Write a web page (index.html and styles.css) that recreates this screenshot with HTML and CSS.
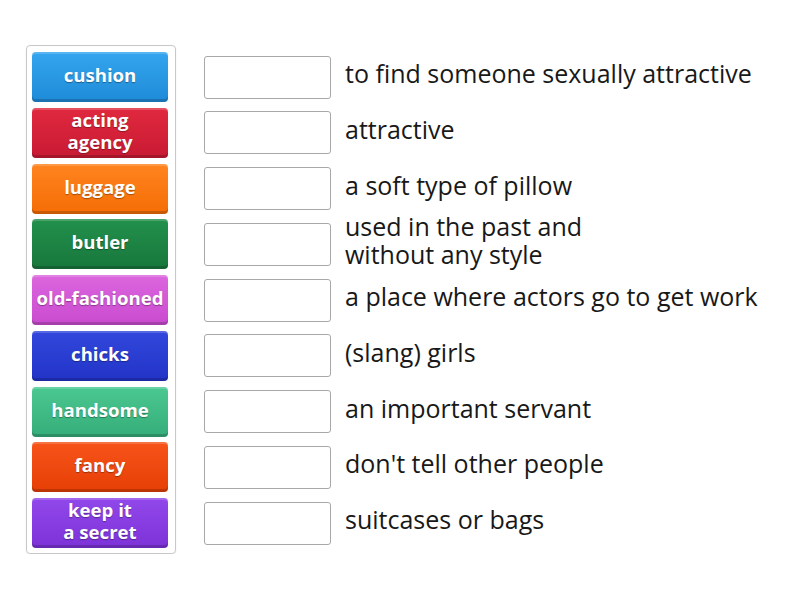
FILE: index.html
```
<!DOCTYPE html>
<html lang="en">
<head>
  <meta charset="UTF-8">
  <meta name="viewport" content="width=device-width, initial-scale=1.0">
  <title>Match up</title>
  <link rel="stylesheet" href="styles.css">
</head>
<body>
  <div class="activity">
    <div class="tray">
      <div class="tile blue">cushion</div>
      <div class="tile red">acting<br>agency</div>
      <div class="tile orange">luggage</div>
      <div class="tile green">butler</div>
      <div class="tile pink">old-fashioned</div>
      <div class="tile navy">chicks</div>
      <div class="tile mint">handsome</div>
      <div class="tile flame">fancy</div>
      <div class="tile purple">keep it<br>a secret</div>
    </div>
    <div class="targets">
      <div class="row"><div class="slot"></div><p class="clue">to find someone sexually attractive</p></div>
      <div class="row"><div class="slot"></div><p class="clue">attractive</p></div>
      <div class="row"><div class="slot"></div><p class="clue">a soft type of pillow</p></div>
      <div class="row"><div class="slot"></div><p class="clue">used in the past and<br>without any style</p></div>
      <div class="row"><div class="slot"></div><p class="clue">a place where actors go to get work</p></div>
      <div class="row"><div class="slot"></div><p class="clue">(slang) girls</p></div>
      <div class="row"><div class="slot"></div><p class="clue">an important servant</p></div>
      <div class="row"><div class="slot"></div><p class="clue">don't tell other people</p></div>
      <div class="row"><div class="slot"></div><p class="clue">suitcases or bags</p></div>
    </div>
  </div>
</body>
</html>
```

FILE: styles.css
```
body {
  margin: 0;
  background-color: #fff;
  font-family: "Open Sans", "Noto Sans", sans-serif;
}

.activity {
  display: flex;
  align-items: flex-start;
  gap: 28px;
  padding: 45px 0 0 26px;
}

.tray {
  display: flex;
  flex-direction: column;
  gap: 5.75px;
  padding: 6px 7px 5px 5px;
  border: 1px solid #c8c8c8;
  border-radius: 4px;
  box-shadow: 0 1px 2px rgba(0, 0, 0, 0.08);
}

.tile {
  box-sizing: border-box;
  width: 136px;
  height: 50px;
  padding-bottom: 4px;
  display: flex;
  justify-content: center;
  align-items: center;
  text-align: center;
  color: #fff;
  font-weight: 700;
  font-size: 18.6px;
  line-height: 22px;
  border-radius: 4px;
  text-shadow: 0 1px 1px rgba(0, 0, 0, 0.35);
  box-shadow: inset 0 -3px 0 rgba(0, 0, 0, 0.18), inset 0 2px 0 rgba(255, 255, 255, 0.18);
}

.blue { background: linear-gradient(#34a5ee, #1f8bd8); }
.red { background: linear-gradient(#e0293f, #c81a33); }
.orange { background: linear-gradient(#ff8420, #f56d05); }
.green { background: linear-gradient(#22904c, #18773c); }
.pink { background: linear-gradient(#dc66de, #c94bcf); }
.navy { background: linear-gradient(#3347dc, #2234c8); }
.mint { background: linear-gradient(#4bc891, #35ad7a); }
.flame { background: linear-gradient(#f7541a, #e63f06); }
.purple { background: linear-gradient(#9148ea, #7d32d8); }

.targets {
  display: flex;
  flex-direction: column;
  gap: 5.75px;
  padding-top: 7px;
}

.row {
  height: 50px;
  display: flex;
  align-items: center;
  gap: 14px;
}

.slot {
  width: 125px;
  height: 41px;
  border: 1px solid #a8a8a8;
  border-radius: 3px;
  background-color: #fff;
  flex-shrink: 0;
}

.clue {
  margin: 0;
  padding-bottom: 8px;
  font-size: 25px;
  line-height: 28px;
  color: #181818;
  white-space: nowrap;
}
```
